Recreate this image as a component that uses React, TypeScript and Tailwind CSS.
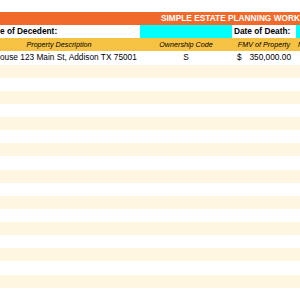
import React from "react";

const ROW = "h-[13.125px] leading-[13.125px]";

export default function App() {
  const stripes = Array.from({ length: 18 }, (_, i) => i);
  return (
    <div
      className="w-[300px] h-[300px] overflow-hidden bg-white text-black"
      style={{ fontFamily: '"Liberation Sans", Arial, sans-serif' }}
    >
      <div className="h-[12px]" />
      {/* Title */}
      <div className={`${ROW} bg-[#f26a2b] text-white font-bold text-[8.3px] whitespace-nowrap overflow-hidden pl-[161px]`}>
        SIMPLE ESTATE PLANNING WORKSHEET
      </div>
      {/* Decedent row */}
      <div className={`${ROW} flex text-[8.3px] font-bold whitespace-nowrap overflow-hidden`}>
        <div className="w-[140px] shrink-0 overflow-hidden">
          <span className="block ml-[-18px]">Name of Decedent:</span>
        </div>
        <div className="w-[92px] shrink-0 bg-[#00ffff]" />
        <div className="w-[64px] shrink-0 pl-[2px]">Date of Death:</div>
        <div className="flex-1 bg-[#00ffff]" />
      </div>
      {/* Header row */}
      <div className={`${ROW} flex bg-[#f6c244] text-[7.2px] italic whitespace-nowrap overflow-hidden`}>
        <div className="w-[140px] shrink-0 pr-[22px] text-center">Property Description</div>
        <div className="w-[92px] shrink-0 text-center">Ownership Code</div>
        <div className="w-[64px] shrink-0 text-center">FMV of Property</div>
        <div className="flex-1 pl-[2px] overflow-hidden">Notes</div>
      </div>
      {/* Data row */}
      <div className={`${ROW} flex text-[8.3px] whitespace-nowrap overflow-hidden`}>
        <div className="w-[140px] shrink-0 overflow-hidden">
          <span className="block ml-[-6px]">House 123 Main St, Addison TX 75001</span>
        </div>
        <div className="w-[92px] shrink-0 text-center">S</div>
        <div className="w-[64px] shrink-0 flex justify-between pl-[5px] pr-[5px]">
          <span>$</span>
          <span>350,000.00</span>
        </div>
        <div className="flex-1" />
      </div>
      {stripes.map((i) => (
        <div key={i} className={`${ROW} ${i % 2 === 0 ? "bg-[#fef6e1]" : "bg-white"}`} />
      ))}
    </div>
  );
}
